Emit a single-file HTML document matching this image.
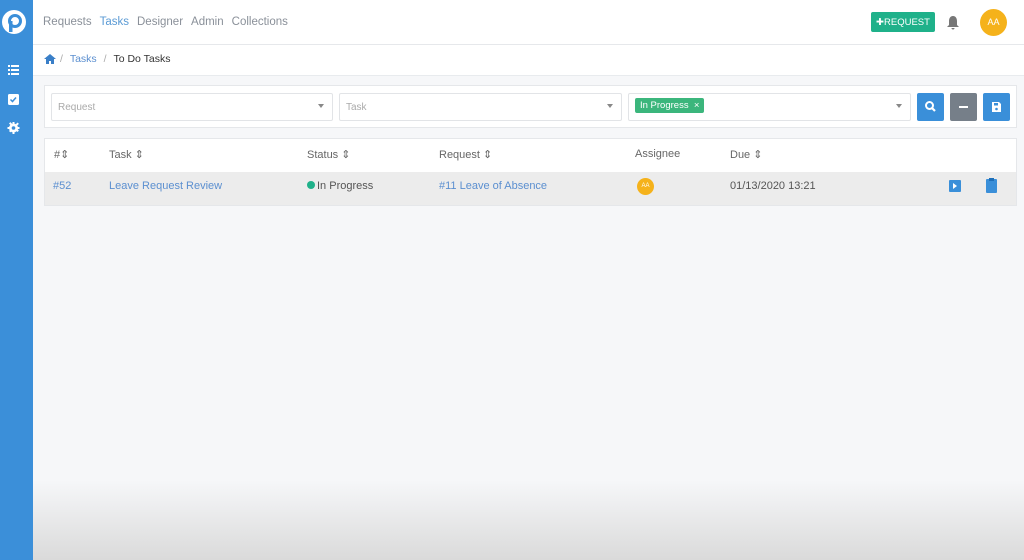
<!DOCTYPE html>
<html><head><style>
*{box-sizing:border-box;margin:0;padding:0}
body{width:1024px;height:560px;overflow:hidden;font-family:"Liberation Sans",sans-serif;background:#f6f7f9;position:relative;font-size:11px;color:#444}
.side{position:absolute;left:0;top:0;width:33px;height:560px;background:#3b8fd9}
.top{position:absolute;left:33px;top:0;right:0;height:45px;background:#fff;border-bottom:1px solid #e6e8eb}
.nav{position:absolute;left:10px;top:16px;font-size:11.5px;color:#8a9099}
.nav span{margin-right:8px}
.crumb{position:absolute;left:33px;top:45px;right:0;height:31px;background:#fff;border-bottom:1px solid #e8ebee}
.panel{position:absolute;left:44px;top:85px;width:973px;height:43px;background:#fff;border:1px solid #e5e7ea}
.sel{position:absolute;top:7px;height:28px;border:1px solid #e2e4e7;border-radius:2px;background:#fff;color:#aaa;font-size:10px;padding:8px 6px}
.sel:after{content:"";position:absolute;right:8px;top:10px;border:3.5px solid transparent;border-top:4px solid #888}
.btn{position:absolute;top:7px;width:27px;height:28px;border-radius:2px;background:#3a8fd9}
.tbl{position:absolute;left:44px;top:138px;width:973px;height:68px;background:#fff;border:1px solid #e5e7ea}
.th{position:absolute;top:9px;font-size:11px;color:#666}
.row{position:absolute;left:0;top:33px;width:971px;height:33px;background:#ececec}
.td{position:absolute;top:8px;font-size:11px}
.blue{color:#5b8fd0}
.fade{position:absolute;left:33px;right:0;top:480px;bottom:0;background:linear-gradient(#f6f7f900,#dadada)}
</style></head><body>
<div class="side">
<svg width="33" height="140" style="position:absolute;left:0;top:0">
<circle cx="14" cy="22" r="12" fill="#fff"/><circle cx="15" cy="21" r="5.5" fill="none" stroke="#3b8fd9" stroke-width="3"/><rect x="9" y="21" width="3.5" height="11" fill="#3b8fd9"/>
<g fill="#fff"><rect x="8" y="65" width="2" height="2"/><rect x="11" y="65" width="8" height="2"/><rect x="8" y="69" width="2" height="2"/><rect x="11" y="69" width="8" height="2"/><rect x="8" y="73" width="2" height="2"/><rect x="11" y="73" width="8" height="2"/>
<rect x="8" y="94" width="11" height="11" rx="1.5"/><circle cx="13.5" cy="128" r="4.5"/><path d="M12.5 122h2v12h-2zM7.5 127h12v2h-12zM9 123.5l1.4-1.4 8.5 8.5-1.4 1.4zM18.9 123.9l-1.4-1.4-8.5 8.5 1.4 1.4z"/></g>
<path d="M10.5 99.5l2 2 3.5-4" stroke="#3b8fd9" stroke-width="1.5" fill="none"/><circle cx="13.5" cy="128" r="1.8" fill="#3b8fd9"/>
</svg></div>
<div class="top">
<div class="nav"><span>Requests</span><span style="color:#5b9bd5">Tasks</span><span>Designer</span><span>Admin</span><span>Collections</span></div>
<div style="position:absolute;left:838px;top:12px;width:64px;height:20px;background:#1fb18a;border-radius:2px;color:#fff;font-size:9.5px;line-height:21px;text-align:center">✚REQUEST</div>
<svg style="position:absolute;left:913px;top:15px" width="14" height="16"><path d="M7 1C4 1 3 4 3 6v4L1 12h12l-2-2V6c0-2-1-5-4-5zM5.5 13a1.5 1.5 0 003 0z" fill="#777"/></svg>
<div style="position:absolute;left:947px;top:9px;width:27px;height:27px;border-radius:50%;background:#f5b21b;color:#fff;font-size:9px;line-height:27px;text-align:center">AA</div>
</div>
<div class="crumb"><svg style="position:absolute;left:11px;top:9px" width="12" height="10"><path d="M6 0L0 5h2v5h3V7h2v3h3V5h2z" fill="#3a7fc8"/></svg>
<div style="position:absolute;left:27px;top:8px;font-size:10.5px;color:#aaa">/ <span class="blue" style="margin:0 4px">Tasks</span> / <span style="color:#333;margin-left:4px">To Do Tasks</span></div></div>
<div class="panel">
<div class="sel" style="left:6px;width:282px">Request</div>
<div class="sel" style="left:294px;width:283px">Task</div>
<div class="sel" style="left:583px;width:283px;padding:4px 6px"><span style="display:inline-block;background:#3bb67c;color:#fff;border-radius:2px;padding:2px 5px;font-size:9.5px">In Progress &nbsp;×</span></div>
<div class="btn" style="left:872px"><svg width="27" height="28"><circle cx="12.5" cy="12.5" r="3.5" fill="none" stroke="#fff" stroke-width="2"/><path d="M15 15l3 3" stroke="#fff" stroke-width="2.2"/></svg></div>
<div class="btn" style="left:905px;background:#767f89"><div style="position:absolute;left:9px;top:13px;width:9px;height:2px;background:#fff"></div></div>
<div class="btn" style="left:938px"><svg width="27" height="28"><path d="M9 9h7l2 2v8H9z" fill="#fff"/><rect x="11" y="10" width="4" height="2.5" fill="#3a8fd9"/><circle cx="13.5" cy="16" r="1.3" fill="#3a8fd9"/></svg></div>
</div>
<div class="tbl">
<div class="th" style="left:9px">#⇕</div><div class="th" style="left:64px">Task ⇕</div><div class="th" style="left:262px">Status ⇕</div><div class="th" style="left:394px">Request ⇕</div><div class="th" style="left:590px">Assignee</div><div class="th" style="left:685px">Due ⇕</div>
<div class="row">
<div class="td blue" style="left:8px">#52</div>
<div class="td blue" style="left:64px">Leave Request Review</div>
<div class="td" style="left:262px;color:#555"><span style="display:inline-block;width:8px;height:8px;border-radius:50%;background:#1fb18a;margin-right:2px"></span>In Progress</div>
<div class="td blue" style="left:394px">#11 Leave of Absence</div>
<div style="position:absolute;left:592px;top:6px;width:17px;height:17px;border-radius:50%;background:#f5b21b;color:#fff;font-size:6px;line-height:17px;text-align:center">AA</div>
<div class="td" style="left:685px;color:#555">01/13/2020 13:21</div>
<div style="position:absolute;left:904px;top:8px;width:12px;height:12px;background:#3a8fd9;border-radius:1px"><div style="position:absolute;left:4px;top:3px;border:3px solid transparent;border-left:4px solid #fff;border-right:0"></div></div>
<div style="position:absolute;left:941px;top:7px;width:11px;height:14px;background:#3a8fd9;border-radius:1px"><div style="position:absolute;left:3px;top:-1px;width:5px;height:3px;background:#1f6fb8"></div></div>
</div></div>
<div class="fade"></div>
</body></html>
